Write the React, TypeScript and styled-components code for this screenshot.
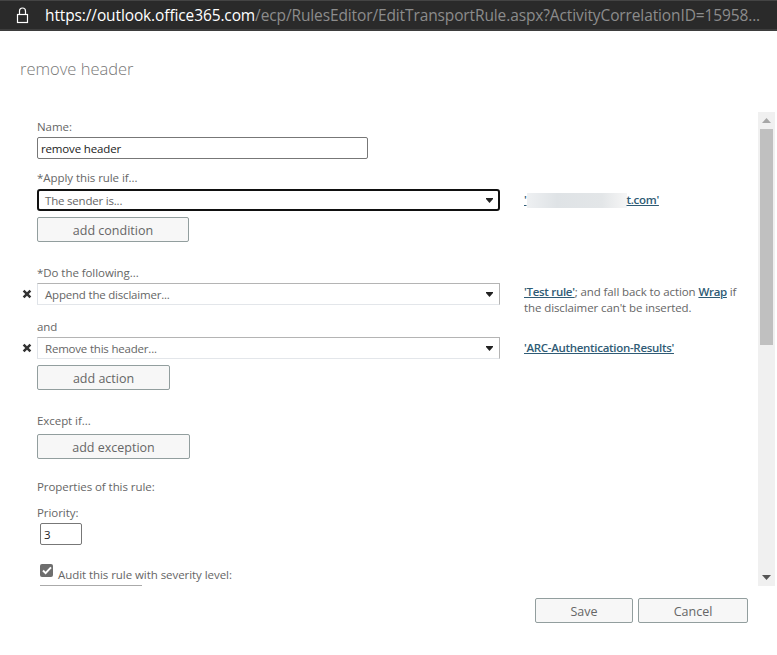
import React from "react";
import styled, {createGlobalStyle} from "styled-components";

const GlobalStyle = createGlobalStyle`
  html, body {
    margin: 0;
    padding: 0;
    background: #fff;
  }
  body {
    font-family: "Open Sans", "Noto Sans", "Liberation Sans", sans-serif;
    font-size: 11.5px;
    letter-spacing: -0.06px;
    color: #666;
  }
`;

const Page = styled.div`
  width: 777px;
  height: 655px;
  display: flex;
  flex-direction: column;
  overflow: hidden;
`;

const AddressBar = styled.div`
  height: 28px;
  flex: none;
  padding-left: 16px;
  display: flex;
  align-items: center;
  gap: 16px;
  background: #2a2a2a;
  border-top: 1px solid #444;
  border-bottom: 2px solid #3d3d3d;
  font-size: 15.5px;
  letter-spacing: -0.12px;
  white-space: nowrap;
`;

const Url = styled.div`
  color: #8c8c8c;
  overflow: hidden;
`;

const Origin = styled.span`
  color: #fff;
`;

const Title = styled.h1`
  margin: 0;
  padding: 27px 0 0 20px;
  height: 54px;
  flex: none;
  box-sizing: border-box;
  font-size: 16.5px;
  line-height: 22px;
  font-weight: 300;
  letter-spacing: 0;
  color: #777;
`;

const ScrollPane = styled.div`
  margin-top: 27px;
  height: 474px;
  flex: none;
  display: flex;
  overflow: hidden;
`;

const Form = styled.div`
  width: 758px;
  height: 474px;
  overflow: hidden;
  padding: 7px 0 0 37px;
  box-sizing: border-box;
`;

const Label = styled.div<{$top?: number}>`
  height: 16px;
  line-height: 16px;
  margin-top: ${p => p.$top ?? 0}px;
  white-space: nowrap;
`;

const TextBox = styled.input<{$width: number; $indent?: number}>`
  display: block;
  width: ${p => p.$width}px;
  height: 22px;
  box-sizing: border-box;
  margin: 2px 0 0 ${p => p.$indent ?? 0}px;
  padding: 0 3px;
  border: 1px solid #777;
  border-radius: 2px;
  background: #fff;
  font: inherit;
  letter-spacing: -0.15px;
  color: #222;
  outline: none;
`;

const RuleRow = styled.div<{$top?: number}>`
  display: flex;
  align-items: flex-start;
  height: 22px;
  margin-top: ${p => p.$top ?? 2}px;
  margin-left: -37px;
`;

const RemoveCell = styled.div`
  width: 37px;
  height: 22px;
  flex: none;
  display: flex;
  align-items: center;
  padding-left: 22px;
  box-sizing: border-box;
`;

const Select = styled.div<{$focused?: boolean}>`
  width: 463px;
  height: 22px;
  flex: none;
  box-sizing: border-box;
  display: flex;
  align-items: center;
  justify-content: space-between;
  padding: 0 ${p => (p.$focused ? 4 : 5)}px 0 ${p => (p.$focused ? 6 : 7)}px;
  background: #fff;
  border: ${p => (p.$focused ? "2px solid #111" : "1px solid #b4b4b4")};
  border-bottom-color: ${p => (p.$focused ? "#111" : "#e3e6ea")};
  border-left-color: ${p => (p.$focused ? "#111" : "#dfe3e8")};
  border-radius: ${p => (p.$focused ? "3px" : "0")};
  letter-spacing: -0.2px;
  color: #666;
`;

const Summary = styled.div<{$wrapped?: boolean}>`
  margin-left: 24px;
  width: 222px;
  line-height: 16px;
  padding-top: ${p => (p.$wrapped ? 1 : 3)}px;
  letter-spacing: -0.1px;
`;

const ValueLink = styled.a`
  color: #2f5b75;
  font-weight: 600;
  letter-spacing: -0.3px;
  text-decoration: underline;
`;

const Redacted = styled.span`
  display: inline-block;
  width: 100px;
  height: 15px;
  vertical-align: -4px;
  background: linear-gradient(90deg, #eef0f2, #dfe3e6 30%, #e3e6e8 75%, #f6f6f6);
`;

const ActionButton = styled.button<{$width: number; $top?: number}>`
  display: block;
  width: ${p => p.$width}px;
  height: 25px;
  box-sizing: border-box;
  margin-top: ${p => p.$top ?? 6}px;
  padding: 1px 0 0;
  background: #f7f7f7;
  border: 1px solid #929e9e;
  border-radius: 2px;
  font: inherit;
  font-size: 12.5px;
  letter-spacing: 0;
  color: #666;
`;

const AuditRow = styled.div`
  display: flex;
  align-items: center;
  gap: 5px;
  margin: 21px 0 0 3px;
  height: 16px;
`;

const CheckMark = styled.span`
  width: 13px;
  height: 13px;
  display: flex;
  align-items: center;
  justify-content: center;
  margin-top: -7px;
  background: #6e6e6e;
  border-radius: 2px;
`;

const SeverityBox = styled.div`
  width: 102px;
  height: 22px;
  margin: 3px 0 0 3px;
  box-sizing: border-box;
  border-top: 1px solid #aaa;
`;

const ScrollBar = styled.div`
  width: 17px;
  height: 474px;
  display: flex;
  flex-direction: column;
  align-items: center;
  background: #f0f0f0;
`;

const ScrollArrow = styled.div`
  height: 17px;
  flex: none;
  display: flex;
  align-items: center;
  justify-content: center;
`;

const ScrollThumb = styled.div`
  width: 13px;
  height: 216px;
  flex: none;
  background: #c0c0c0;
`;

const ScrollTrack = styled.div`
  flex: 1;
`;

const Footer = styled.div`
  display: flex;
  justify-content: flex-end;
  gap: 5px;
  padding: 12px 29px 0 0;
`;

const Caret = () => (
  <svg width="9" height="5" viewBox="0 0 9 5">
    <path d="M1 0h7v1L4.5 5 1 1z" fill="#222" />
  </svg>
);

const RemoveIcon = () => (
  <svg width="10" height="10" viewBox="0 0 10 10">
    <path d="M1.6 1.6l6.8 6.8M8.4 1.6L1.6 8.4" stroke="#333" strokeWidth="2.5" />
  </svg>
);

const Lock = () => (
  <svg width="13" height="17" viewBox="0 0 13 17" fill="none" stroke="#fff">
    <rect x="1.5" y="7.5" width="10" height="8" strokeWidth="1.2" />
    <path d="M3.5 7.5V4a3 3 0 0 1 6 0v3.5" strokeWidth="1.2" />
  </svg>
);

const App: React.FC = () => {
  return (
    <Page>
      <GlobalStyle />
      <AddressBar>
        <Lock />
        <Url>
          <Origin>https://outlook.office365.com</Origin>
          /ecp/RulesEditor/EditTransportRule.aspx?ActivityCorrelationID=15958...
        </Url>
      </AddressBar>

      <Title>remove header</Title>

      <ScrollPane>
        <Form>
          <Label>Name:</Label>
          <TextBox $width={331} defaultValue="remove header" readOnly />

          <Label $top={11}>*Apply this rule if...</Label>
          <RuleRow $top={3}>
            <RemoveCell />
            <Select $focused>
              The sender is...
              <Caret />
            </Select>
            <Summary>
              <ValueLink>'<Redacted />t.com'</ValueLink>
            </Summary>
          </RuleRow>
          <ActionButton $width={152}>add condition</ActionButton>

          <Label $top={23}>*Do the following...</Label>
          <RuleRow>
            <RemoveCell><RemoveIcon /></RemoveCell>
            <Select>
              Append the disclaimer...
              <Caret />
            </Select>
            <Summary $wrapped>
              <ValueLink>'Test rule'</ValueLink>; and fall back to action{" "}
              <ValueLink>Wrap</ValueLink> if the disclaimer can't be inserted.
            </Summary>
          </RuleRow>
          <Label $top={14}>and</Label>
          <RuleRow>
            <RemoveCell><RemoveIcon /></RemoveCell>
            <Select>
              Remove this header...
              <Caret />
            </Select>
            <Summary>
              <ValueLink>'ARC-Authentication-Results'</ValueLink>
            </Summary>
          </RuleRow>
          <ActionButton $width={133}>add action</ActionButton>

          <Label $top={23}>Except if...</Label>
          <ActionButton $width={153} $top={5}>add exception</ActionButton>

          <Label $top={20}>Properties of this rule:</Label>
          <Label $top={10}>Priority:</Label>
          <TextBox $width={42} $indent={3} defaultValue="3" readOnly />

          <AuditRow>
            <CheckMark>
              <svg width="10" height="9" viewBox="0 0 10 9">
                <path d="M1 4.5l2.6 2.6L9 1.4" fill="none" stroke="#fff" strokeWidth="2" />
              </svg>
            </CheckMark>
            Audit this rule with severity level:
          </AuditRow>
          <SeverityBox />
        </Form>

        <ScrollBar>
          <ScrollArrow>
            <svg width="9" height="5" viewBox="0 0 9 5"><path d="M4.5 0L9 5H0z" fill="#a6a6a6" /></svg>
          </ScrollArrow>
          <ScrollThumb />
          <ScrollTrack />
          <ScrollArrow>
            <svg width="9" height="5" viewBox="0 0 9 5"><path d="M0 0h9L4.5 5z" fill="#555" /></svg>
          </ScrollArrow>
        </ScrollBar>
      </ScrollPane>

      <Footer>
        <ActionButton $width={98} $top={0}>Save</ActionButton>
        <ActionButton $width={110} $top={0}>Cancel</ActionButton>
      </Footer>
    </Page>
  );
};

export default App;
